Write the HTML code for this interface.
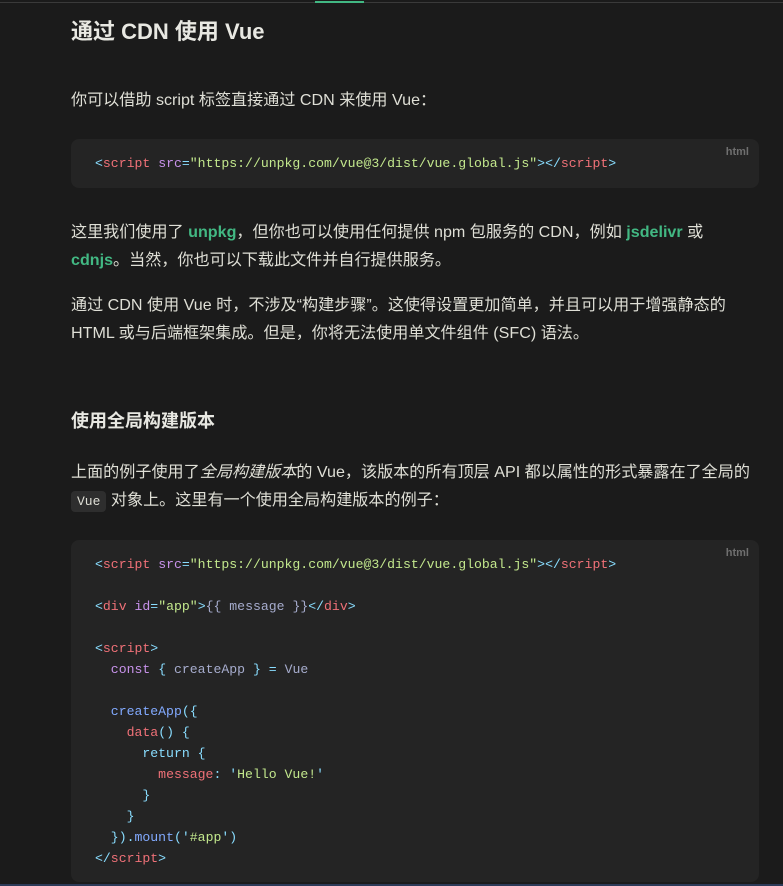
<!DOCTYPE html>
<html><head><meta charset="utf-8"><style>
html,body{margin:0;padding:0;background:#1b1b1b;width:783px;height:886px;overflow:hidden}
body{font-family:"Liberation Sans","Noto Sans CJK SC",sans-serif;color:#dfdfd6;font-size:16px;position:relative}
.top{position:absolute;left:0;top:2px;width:783px;height:1px;background:#3a3a3a}
.topg{position:absolute;left:315px;top:1px;width:49px;height:2px;background:#42b883}
.bot{position:absolute;left:0;top:884px;width:783px;height:2px;background:#2c3a58}
.a{position:absolute;left:71px;white-space:nowrap}
h2{position:absolute;left:71px;top:16px;margin:0;font-size:22px;font-weight:700;line-height:32px;color:#e8e8e2}
h3{position:absolute;left:71px;top:407px;margin:0;font-size:18px;font-weight:700;line-height:28px;color:#e8e8e2}
p{margin:0;line-height:28px;font-size:16.1px}
.g{color:#42b883;font-weight:600}
.code{position:absolute;left:71px;width:688px;background:#242424;border-radius:8px}
.lang{position:absolute;right:10px;top:7px;font-size:11px;font-weight:700;color:#6f6f6f}
pre{margin:0;font-family:"Liberation Mono",monospace;font-size:13.16px;line-height:21px;padding:0 0 0 24px;color:#a6accd}
.t{color:#f07178}.b{color:#89ddff}.at{color:#c792ea}.s{color:#c3e88d}.v{color:#a6accd}.k{color:#89ddff}.f{color:#82aaff}.r{color:#f07178}
code.in{font-family:"Liberation Mono",monospace;font-size:13px;background:#2e2e2e;border-radius:4px;padding:3px 6px;color:#dfdfd6}
</style></head><body>
<div class="top"></div><div class="topg"></div>
<h2>通过 CDN 使用 Vue</h2>
<p class="a" style="top:86px">你可以借助 script 标签直接通过 CDN 来使用 Vue：</p>
<div class="code" style="top:139px;height:49px"><span class="lang">html</span>
<pre style="padding-top:14px"><span class="b">&lt;</span><span class="t">script</span> <span class="at">src</span><span class="b">=</span><span class="s">"https://unpkg.com/vue@3/dist/vue.global.js"</span><span class="b">&gt;&lt;/</span><span class="t">script</span><span class="b">&gt;</span></pre></div>
<p class="a" style="top:218px">这里我们使用了 <span class="g">unpkg</span>，但你也可以使用任何提供 npm 包服务的 CDN，例如 <span class="g">jsdelivr</span> 或<br><span class="g">cdnjs</span>。当然，你也可以下载此文件并自行提供服务。</p>
<p class="a" style="top:291px">通过 CDN 使用 Vue 时，不涉及“构建步骤”。这使得设置更加简单，并且可以用于增强静态的<br>HTML 或与后端框架集成。但是，你将无法使用单文件组件 (SFC) 语法。</p>
<h3>使用全局构建版本</h3>
<p class="a" style="top:458px">上面的例子使用了<i>全局构建版本</i>的 Vue，该版本的所有顶层 API 都以属性的形式暴露在了全局的<br><code class="in">Vue</code> 对象上。这里有一个使用全局构建版本的例子：</p>
<div class="code" style="top:540px;height:342px"><span class="lang">html</span>
<pre style="padding-top:14px"><span class="b">&lt;</span><span class="t">script</span> <span class="at">src</span><span class="b">=</span><span class="s">"https://unpkg.com/vue@3/dist/vue.global.js"</span><span class="b">&gt;&lt;/</span><span class="t">script</span><span class="b">&gt;</span>

<span class="b">&lt;</span><span class="t">div</span> <span class="at">id</span><span class="b">=</span><span class="s">"app"</span><span class="b">&gt;</span>{{ message }}<span class="b">&lt;/</span><span class="t">div</span><span class="b">&gt;</span>

<span class="b">&lt;</span><span class="t">script</span><span class="b">&gt;</span>
  <span class="at">const</span> <span class="b">{</span> createApp <span class="b">}</span> <span class="b">=</span> Vue

  <span class="f">createApp</span><span class="b">({</span>
    <span class="r">data</span><span class="b">()</span> <span class="b">{</span>
      <span class="k">return</span> <span class="b">{</span>
        <span class="r">message</span><span class="b">:</span> <span class="b">'</span><span class="s">Hello Vue!</span><span class="b">'</span>
      <span class="b">}</span>
    <span class="b">}</span>
  <span class="b">}).</span><span class="f">mount</span><span class="b">(</span><span class="b">'</span><span class="s">#app</span><span class="b">'</span><span class="b">)</span>
<span class="b">&lt;/</span><span class="t">script</span><span class="b">&gt;</span></pre></div>
<div class="bot"></div>
</body></html>
